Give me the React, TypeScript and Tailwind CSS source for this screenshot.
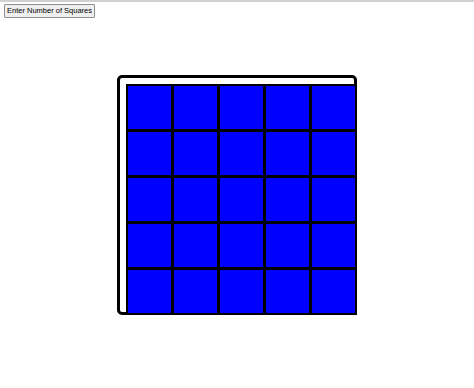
export default function App() {
  const squares = Array.from({ length: 25 }, (_, i) => i);

  return (
    <div className="h-[388px] w-full bg-white font-['Liberation_Sans',Arial,sans-serif]">
      <div className="h-[2px] w-full bg-[#d0d0d0]" />
      <div className="flex pl-[4px] pt-[2px]">
        <button className="h-[14px] px-[2px] border border-[#8f8f8f] bg-[#efefef] text-[7.5px] leading-none text-black rounded-[1px]">
          Enter Number of Squares
        </button>
      </div>
      <div className="mx-auto mt-[57px] box-border h-[240px] w-[240px] rounded-[5px] border-[3px] border-black pl-[6px] pt-[6px]">
        <div className="grid w-[231px] grid-cols-5 gap-[3px] bg-black p-[2px]">
          {squares.map((i) => (
            <div key={i} className="h-[43px] w-[43px] bg-[#0000ff]" />
          ))}
        </div>
      </div>
    </div>
  );
}
